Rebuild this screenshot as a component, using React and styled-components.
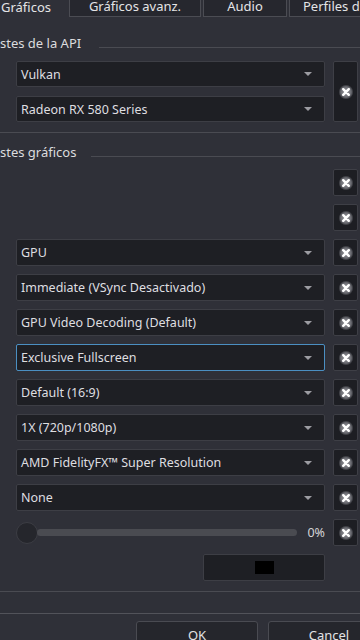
import styled, { createGlobalStyle } from 'styled-components'

const GlobalStyle = createGlobalStyle`
  html, body {
    margin: 0;
    padding: 0;
    background: #2f3038;
    overflow: hidden;
  }
  #root {
    width: 360px;
    height: 640px;
    overflow: hidden;
    font-family: "Noto Sans", "Open Sans", sans-serif;
    font-size: 13px;
    color: #dedee0;
  }
`

const Page = styled.div`
  display: flex;
  flex-direction: column;
  width: 360px;
  height: 640px;
  overflow: hidden;
`

const TabBar = styled.div`
  display: flex;
  gap: 2px;
  height: 17px;
  margin-left: -15px;
  white-space: nowrap;
`

const Tab = styled.div`
  flex: none;
  width: ${({ $w }) => $w}px;
  box-sizing: border-box;
  display: flex;
  align-items: flex-end;
  justify-content: center;
  padding-bottom: 3px;
  line-height: 14px;
  color: #e4e4e6;
  background: ${({ $active }) => ($active ? '#2f3038' : '#26272e')};
  border: ${({ $active }) => ($active ? 'none' : '1px solid #4b4c53')};
  border-top: none;
`

const Pane = styled.div`
  padding: 19px 0 21px;
  border-bottom: 1px solid #52535a;
`

const Group = styled.section`
  border-bottom: 1px solid #4a4b52;
  padding-bottom: ${({ $pb }) => $pb}px;
  margin-top: ${({ $mt }) => $mt}px;
`

const GroupHeader = styled.div`
  display: flex;
  align-items: center;
  height: 14px;
  line-height: 14px;
`

const GroupTitle = styled.span`
  color: #dcdcde;
  white-space: nowrap;
`

const GroupLine = styled.div`
  flex: 1;
  height: 1px;
  margin-left: ${({ $gap }) => $gap}px;
  margin-top: 8px;
  background: #4a4b52;
`

const Rows = styled.div`
  display: grid;
  grid-template-columns: 309px 25px;
  column-gap: 8px;
  row-gap: ${({ $gap }) => $gap}px;
  grid-auto-rows: ${({ $h }) => $h}px;
  padding: ${({ $pt }) => $pt}px 0 0 16px;
`

const Combo = styled.div`
  box-sizing: border-box;
  height: 100%;
  display: flex;
  align-items: center;
  justify-content: space-between;
  padding: 0 12px 0 4px;
  background: #1e1f24;
  border: 1px solid ${({ $focused }) => ($focused ? '#4b8fc2' : '#3d3e45')};
  border-radius: 2px;
  color: #dedee0;
  font-size: 12.5px;
  white-space: nowrap;
`

const Arrow = styled.span`
  width: 0;
  height: 0;
  border-left: 4.5px solid transparent;
  border-right: 4.5px solid transparent;
  border-top: 4.5px solid #9c9ca2;
`

const ClearButton = styled.button`
  box-sizing: border-box;
  grid-column: 2;
  grid-row: ${({ $span }) => ($span ? `span ${$span}` : 'auto')};
  display: flex;
  align-items: center;
  justify-content: center;
  padding: 0;
  background: #1d1e23;
  border: 1px solid #3e3f46;
  border-radius: 2px;
`

const Empty = styled.div`
  grid-column: 1;
`

const SliderRow = styled.div`
  display: flex;
  align-items: center;
`

const Thumb = styled.div`
  box-sizing: border-box;
  width: 22px;
  height: 22px;
  border-radius: 50%;
  background: #25262c;
  border: 1px solid #3c3d44;
  flex: none;
`

const Track = styled.div`
  flex: 1;
  height: 7px;
  border-radius: 4px;
  background: #4a4b51;
  margin-left: -1px;
`

const Percent = styled.span`
  width: 20px;
  margin-left: 8px;
  text-align: right;
  color: #d4d4d6;
  font-size: 12.5px;
`

const ColorCell = styled.div`
  display: flex;
  justify-content: flex-end;
`

const ColorButton = styled.button`
  box-sizing: border-box;
  width: 122px;
  height: 27px;
  display: flex;
  align-items: center;
  justify-content: center;
  padding: 0;
  background: #1e1f24;
  border: 1px solid #3d3e45;
  border-radius: 2px;
`

const Swatch = styled.span`
  width: 19px;
  height: 13px;
  background: #000;
`

const Footer = styled.div`
  display: flex;
  gap: 10px;
  padding: 7px 0 0 136px;
`

const DialogButton = styled.button`
  flex: none;
  box-sizing: border-box;
  width: 122px;
  height: 27px;
  background: #25262c;
  border: 1px solid #4a4b52;
  border-radius: 3px;
  color: #e2e2e4;
  font-family: inherit;
  font-size: 13px;
`

const XIcon = () => (
  <svg width="16" height="16" viewBox="0 0 16 16">
    <defs>
      <radialGradient id="halo" cx="50%" cy="50%" r="50%">
        <stop offset="0%" stopColor="#9a9aa0" />
        <stop offset="70%" stopColor="#6a6b71" />
        <stop offset="100%" stopColor="#6a6b71" stopOpacity="0" />
      </radialGradient>
    </defs>
    <circle cx="8" cy="8" r="7.5" fill="url(#halo)" />
    <path d="M5.2 5.2 L10.8 10.8 M10.8 5.2 L5.2 10.8" stroke="#ffffff" strokeWidth="2.4" strokeLinecap="round" />
  </svg>
)

const settings = [
  null,
  null,
  { label: 'GPU' },
  { label: 'Immediate (VSync Desactivado)' },
  { label: 'GPU Video Decoding (Default)' },
  { label: 'Exclusive Fullscreen', focused: true },
  { label: 'Default (16:9)' },
  { label: '1X (720p/1080p)' },
  { label: 'AMD FidelityFX™ Super Resolution' },
  { label: 'None' },
]

const App = () => (
  <>
    <GlobalStyle />
    <Page>
      <TabBar>
        <Tab $active $w={82}>Gráficos</Tab>
        <Tab $w={132}>Gráficos avanz.</Tab>
        <Tab $w={84}>Audio</Tab>
        <Tab $w={130}>Perfiles de juego</Tab>
      </TabBar>
      <Pane>
        <Group $pb={10} $mt={0}>
          <GroupHeader>
            <GroupTitle>stes de la API</GroupTitle>
            <GroupLine $gap={18} />
          </GroupHeader>
          <Rows $gap={9} $h={26} $pt={11}>
            <Combo>Vulkan<Arrow /></Combo>
            <ClearButton $span={2}><XIcon /></ClearButton>
            <Combo>Radeon RX 580 Series<Arrow /></Combo>
          </Rows>
        </Group>
        <Group $pb={10} $mt={12}>
          <GroupHeader>
            <GroupTitle>stes gráficos</GroupTitle>
            <GroupLine $gap={15} />
          </GroupHeader>
          <Rows $gap={8} $h={27} $pt={10}>
            {settings.map((s, i) => [
              s ? (
                <Combo key={`c${i}`} $focused={s.focused}>{s.label}<Arrow /></Combo>
              ) : (
                <Empty key={`e${i}`} />
              ),
              <ClearButton key={`x${i}`}><XIcon /></ClearButton>,
            ])}
            <SliderRow>
              <Thumb />
              <Track />
              <Percent>0%</Percent>
            </SliderRow>
            <ClearButton><XIcon /></ClearButton>
            <ColorCell>
              <ColorButton><Swatch /></ColorButton>
            </ColorCell>
          </Rows>
        </Group>
      </Pane>
      <Footer>
        <DialogButton>OK</DialogButton>
        <DialogButton>Cancel</DialogButton>
      </Footer>
    </Page>
  </>
)

export default App
